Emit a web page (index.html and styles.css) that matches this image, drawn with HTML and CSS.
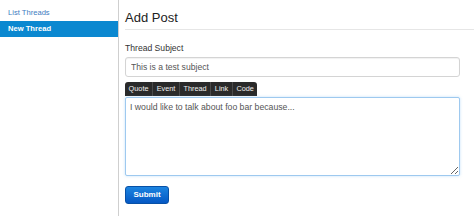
FILE: index.html
```html
<!DOCTYPE html>
<html>
<head>
<meta charset="utf-8">
<link rel="stylesheet" href="styles.css">
</head>
<body>
<div class="page">
  <nav class="sidebar">
    <a class="nav-item" href="#">List Threads</a>
    <a class="nav-item active" href="#">New Thread</a>
  </nav>
  <main class="content">
    <h1 class="title">Add Post</h1>
    <form class="form">
      <label class="label">Thread Subject</label>
      <input class="input" type="text" value="This is a test subject">
      <div class="toolbar">
        <span class="tool">Quote</span><span class="tool">Event</span><span class="tool">Thread</span><span class="tool">Link</span><span class="tool">Code</span>
      </div>
      <textarea class="textarea">I would like to talk about foo bar because...</textarea>
      <div class="actions"><button class="btn" type="button">Submit</button></div>
    </form>
  </main>
</div>
</body>
</html>
```
FILE: styles.css
```css
html, body {
  margin: 0;
  padding: 0;
  background: #fff;
  font-family: "Liberation Sans", Arial, sans-serif;
}
.page {
  display: flex;
  height: 216px;
}
.sidebar {
  width: 118px;
  border-right: 1px solid #cfcfcf;
  padding-top: 5px;
  display: flex;
  flex-direction: column;
  box-sizing: content-box;
}
.nav-item {
  display: block;
  height: 16px;
  line-height: 16px;
  padding-left: 8px;
  font-size: 7.6px;
  color: #3d7cc0;
  text-decoration: none;
}
.nav-item.active {
  background: #0b88d0;
  color: #fff;
  font-weight: bold;
}
.content {
  flex: 1;
  padding-left: 6px;
}
.title {
  margin: 0;
  padding-top: 10px;
  padding-bottom: 3px;
  font-size: 13px;
  line-height: 16px;
  font-weight: normal;
  color: #222;
  border-bottom: 1px solid #e6e6e6;
}
.form {
  display: flex;
  flex-direction: column;
  width: 335px;
}
.label {
  margin-top: 12px;
  font-size: 8.6px;
  line-height: 12px;
  color: #333;
}
.input {
  margin: 3px 0 0;
  height: 20px;
  box-sizing: border-box;
  border: 1px solid #d4d4d4;
  border-radius: 3px;
  padding: 0 5px;
  font-family: inherit;
  font-size: 8.6px;
  color: #555;
  box-shadow: inset 0 1px 1px rgba(0,0,0,0.06);
}
.toolbar {
  margin-top: 5px;
  display: flex;
  align-self: flex-start;
  height: 14px;
  background: #2a2a2a;
  border-radius: 3px 3px 0 0;
}
.tool {
  padding: 0 3.6px;
  font-size: 7.3px;
  line-height: 14px;
  color: #f2f2f2;
  border-left: 1px solid #4a4a4a;
}
.tool:first-child {
  border-left: none;
}
.textarea {
  margin: 1px 0 0;
  height: 79px;
  box-sizing: border-box;
  border: 1px solid #9ec9ef;
  border-radius: 2px;
  padding: 4px 4px;
  font-family: inherit;
  font-size: 8.7px;
  line-height: 11px;
  color: #555;
  resize: vertical;
  box-shadow: 0 0 3px rgba(82,168,236,0.35);
  outline: none;
}
.actions {
  margin-top: 7px;
}
.btn {
  width: 44px;
  height: 18px;
  padding: 0;
  border: 1px solid #0750a6;
  border-radius: 3px;
  background: linear-gradient(#1c84e0, #0558c4);
  color: #fff;
  font-family: inherit;
  font-size: 8px;
  font-weight: bold;
}
```
